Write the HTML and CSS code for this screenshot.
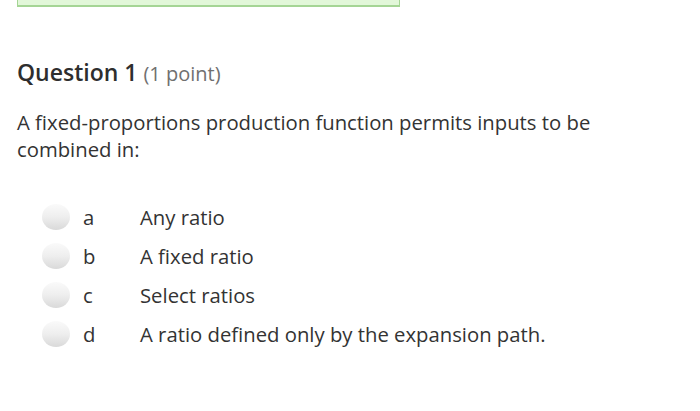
FILE: index.html
```html
<!DOCTYPE html>
<html>
<head>
<meta charset="utf-8">
<link rel="stylesheet" href="styles.css">
</head>
<body>
<div class="page">
  <div class="notice"></div>
  <h2 class="q-title">Question 1 <span class="points">(1 point)</span></h2>
  <p class="q-text">A fixed-proportions production function permits inputs to be combined in:</p>
  <ul class="options">
    <li class="option"><span class="radio"></span><span class="letter">a</span><span class="answer">Any ratio</span></li>
    <li class="option"><span class="radio"></span><span class="letter">b</span><span class="answer">A fixed ratio</span></li>
    <li class="option"><span class="radio"></span><span class="letter">c</span><span class="answer">Select ratios</span></li>
    <li class="option"><span class="radio"></span><span class="letter">d</span><span class="answer">A ratio defined only by the expansion path.</span></li>
  </ul>
</div>
</body>
</html>
```
FILE: styles.css
```css
html, body {
  margin: 0;
  padding: 0;
  background: #ffffff;
}
body {
  font-family: "Open Sans", "DejaVu Sans", sans-serif;
  color: #333333;
}
.page {
  padding: 0 17px;
  width: 666px;
}
.notice {
  width: 381px;
  height: 30px;
  margin-top: -25px;
  background: #e2f7d9;
  border: 1px solid #a5d595;
  border-top: none;
  border-bottom-width: 2px;
}
.q-title {
  margin: 50px 0 0;
  font-size: 23px;
  font-weight: 600;
  line-height: 30px;
  color: #2e2e2e;
}
.points {
  font-size: 20px;
  font-weight: 400;
  color: #707070;
}
.q-text {
  margin: 20px 0 0;
  font-size: 20.3px;
  line-height: 27px;
  color: #333333;
  width: 600px;
}
.options {
  list-style: none;
  margin: 34px 0 0;
  padding: 0;
}
.option {
  display: flex;
  align-items: center;
  height: 39px;
  font-size: 20.3px;
}
.radio {
  width: 28px;
  height: 26px;
  border-radius: 50%;
  margin-left: 25px;
  background: linear-gradient(to bottom, #fafafa 0%, #eeeeee 50%, #d9d9d9 100%);
}
.letter {
  width: 57px;
  margin-left: 13px;
  color: #333333;
}
.answer {
  color: #333333;
}
```
